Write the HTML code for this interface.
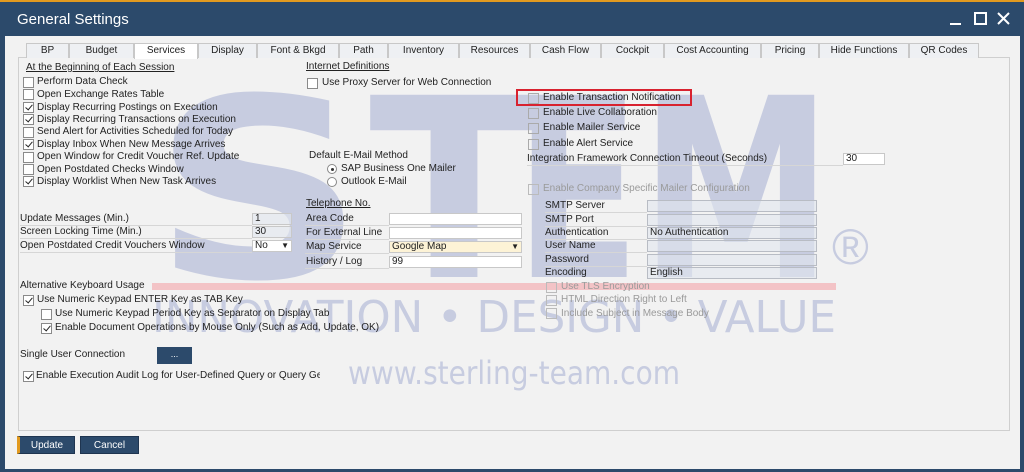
<!DOCTYPE html>
<html><head><meta charset="utf-8"><style>
*{margin:0;padding:0;box-sizing:border-box}
body{width:1024px;height:472px;overflow:hidden;background:#fff;font-family:"Liberation Sans",sans-serif;font-size:10px;color:#222;position:relative}
.a{position:absolute;white-space:nowrap;line-height:12px}
.cb{position:absolute;width:11px;height:11px;border:1px solid #8a8a8a;background:#fff}
.cb.k::after{content:"";position:absolute;left:3px;top:0px;width:3px;height:6px;border:solid #222;border-width:0 1.5px 1.5px 0;transform:rotate(40deg)}
.cb.g{border-color:#bbb;background:transparent}
.in{position:absolute;height:12px;background:#fff;border:1px solid #c8c8c8;font-size:10px;line-height:10px;padding-left:2px}
.gi{position:absolute;height:12px;background:rgba(225,230,238,0.6);border:1px solid #b8bcc4;font-size:10px;line-height:10px;padding-left:2px}
.tab{position:absolute;top:43px;height:15px;border:1px solid #c8c8c8;border-bottom:none;background:#eef0f3;text-align:center;line-height:13px;font-size:10px}
.u{text-decoration:underline}
.ln{position:absolute;height:1px;background:#d6d6d6}
.gr{color:#9a9a9a}
.btn{position:absolute;top:436px;height:18px;background:#2c4a6b;color:#fff;text-align:center;line-height:17px;font-size:10px;border:1px solid #1f3550}
</style></head><body>
<div style="position:absolute;left:0;top:0;width:1024px;height:472px;background:#2c4a6b"></div>
<div style="position:absolute;left:0;top:0;width:1024px;height:2px;background:#e29a1f"></div>
<div class="a" style="left:17px;top:11px;font-size:15px;line-height:18px;color:#fff">General Settings</div>
<div style="position:absolute;left:950px;top:23px;width:11px;height:2px;background:#fff"></div>
<div style="position:absolute;left:974px;top:12px;width:13px;height:13px;border:2px solid #fff"></div>
<svg style="position:absolute;left:997px;top:12px" width="13" height="13"><path d="M1 1L12 12M12 1L1 12" stroke="#fff" stroke-width="2"/></svg>
<div style="position:absolute;left:5px;top:36px;width:1015px;height:433px;background:#f2f2f2"></div>
<div style="position:absolute;left:18px;top:57px;width:992px;height:374px;border:1px solid #cfcfcf;background:#f2f2f2"></div>

<svg style="position:absolute;left:0;top:0" width="1024" height="472">
<g fill="#c7cce0" font-family="DejaVu Sans" font-weight="bold" font-size="250">
<text x="152" y="277" textLength="213" lengthAdjust="spacingAndGlyphs">S</text>
<text x="369" y="277" textLength="170" lengthAdjust="spacingAndGlyphs">T</text>
<text x="515" y="277" textLength="125" lengthAdjust="spacingAndGlyphs">E</text>
<text x="640" y="277" textLength="192" lengthAdjust="spacingAndGlyphs">M</text>
</g>
<text x="832" y="264" font-family="Liberation Sans" font-size="50" fill="#c7cce0">®</text>
<rect x="152" y="283" width="684" height="7" fill="#f3c3c6"/>
<text x="152" y="332" font-family="DejaVu Sans" font-size="44" fill="#c7cce0" textLength="684" lengthAdjust="spacingAndGlyphs">INNOVATION • DESIGN • VALUE</text>
<text x="348" y="384" font-family="DejaVu Sans" font-size="32" fill="#c7cce0" textLength="332" lengthAdjust="spacingAndGlyphs">www.sterling-team.com</text>
</svg>

<div class="tab" style="left:26px;width:43px">BP</div>
<div class="tab" style="left:69px;width:65px">Budget</div>
<div class="tab" style="left:134px;width:64px;background:#fff;height:16px">Services</div>
<div class="tab" style="left:198px;width:59px">Display</div>
<div class="tab" style="left:257px;width:82px">Font &amp; Bkgd</div>
<div class="tab" style="left:339px;width:49px">Path</div>
<div class="tab" style="left:388px;width:71px">Inventory</div>
<div class="tab" style="left:459px;width:71px">Resources</div>
<div class="tab" style="left:530px;width:71px">Cash Flow</div>
<div class="tab" style="left:601px;width:63px">Cockpit</div>
<div class="tab" style="left:664px;width:97px">Cost Accounting</div>
<div class="tab" style="left:761px;width:58px">Pricing</div>
<div class="tab" style="left:819px;width:90px">Hide Functions</div>
<div class="tab" style="left:909px;width:70px">QR Codes</div>

<div class="a u" style="left:26px;top:62px">At the Beginning of Each Session</div>
<div class="cb" style="left:23px;top:77px"></div><div class="a" style="left:37px;top:76px">Perform Data Check</div>
<div class="cb" style="left:23px;top:89px"></div><div class="a" style="left:37px;top:89px">Open Exchange Rates Table</div>
<div class="cb k" style="left:23px;top:102px"></div><div class="a" style="left:37px;top:102px">Display Recurring Postings on Execution</div>
<div class="cb k" style="left:23px;top:114px"></div><div class="a" style="left:37px;top:114px">Display Recurring Transactions on Execution</div>
<div class="cb" style="left:23px;top:127px"></div><div class="a" style="left:37px;top:126px">Send Alert for Activities Scheduled for Today</div>
<div class="cb k" style="left:23px;top:139px"></div><div class="a" style="left:37px;top:139px">Display Inbox When New Message Arrives</div>
<div class="cb" style="left:23px;top:152px"></div><div class="a" style="left:37px;top:151px">Open Window for Credit Voucher Ref. Update</div>
<div class="cb" style="left:23px;top:164px"></div><div class="a" style="left:37px;top:164px">Open Postdated Checks Window</div>
<div class="cb k" style="left:23px;top:176px"></div><div class="a" style="left:37px;top:176px">Display Worklist When New Task Arrives</div>

<div class="a u" style="left:306px;top:61px">Internet Definitions</div>
<div class="cb" style="left:307px;top:78px"></div><div class="a" style="left:322px;top:77px">Use Proxy Server for Web Connection</div>
<div class="a" style="left:309px;top:150px">Default E-Mail Method</div>
<div style="position:absolute;left:327px;top:164px;width:10px;height:10px;border-radius:50%;border:1px solid #888;background:#fff"><div style="position:absolute;left:3px;top:3px;width:3px;height:3px;border-radius:50%;background:#333"></div></div>
<div class="a" style="left:341px;top:163px">SAP Business One Mailer</div>
<div style="position:absolute;left:327px;top:177px;width:10px;height:10px;border-radius:50%;border:1px solid #888;background:#fff"></div>
<div class="a" style="left:341px;top:176px">Outlook E-Mail</div>

<div class="a u" style="left:306px;top:198px">Telephone No.</div>
<div class="a" style="left:306px;top:213px">Area Code</div><div class="in" style="left:389px;top:213px;width:133px"></div>
<div class="a" style="left:306px;top:227px">For External Line</div><div class="in" style="left:389px;top:227px;width:133px"></div>
<div class="a" style="left:306px;top:241px">Map Service</div><div class="in" style="left:389px;top:241px;width:133px;background:#fdf3d6">Google Map<span style="position:absolute;right:2px;top:0;font-size:8px">▼</span></div>
<div class="a" style="left:306px;top:256px">History / Log</div><div class="in" style="left:389px;top:256px;width:133px">99</div>
<div class="ln" style="left:305px;top:225px;width:84px"></div><div class="ln" style="left:305px;top:239px;width:84px"></div><div class="ln" style="left:305px;top:253px;width:84px"></div><div class="ln" style="left:305px;top:268px;width:84px"></div>

<div class="a" style="left:20px;top:213px">Update Messages (Min.)</div><div class="in" style="left:252px;top:213px;width:40px;background:rgba(225,230,238,0.6)">1</div>
<div class="a" style="left:20px;top:226px">Screen Locking Time (Min.)</div><div class="in" style="left:252px;top:226px;width:40px;background:rgba(225,230,238,0.6)">30</div>
<div class="a" style="left:20px;top:240px">Open Postdated Credit Vouchers Window</div><div class="in" style="left:252px;top:240px;width:40px">No<span style="position:absolute;right:2px;top:0;font-size:8px">▼</span></div>
<div class="ln" style="left:20px;top:225px;width:232px"></div><div class="ln" style="left:20px;top:238px;width:232px"></div><div class="ln" style="left:20px;top:252px;width:232px"></div>

<div class="a" style="left:20px;top:280px">Alternative Keyboard Usage</div>
<div class="cb k" style="left:23px;top:295px"></div><div class="a" style="left:37px;top:294px">Use Numeric Keypad ENTER Key as TAB Key</div>
<div class="cb" style="left:41px;top:309px"></div><div class="a" style="left:55px;top:308px">Use Numeric Keypad Period Key as Separator on Display Tab</div>
<div class="cb k" style="left:41px;top:323px"></div><div class="a" style="left:55px;top:322px">Enable Document Operations by Mouse Only (Such as Add, Update, OK)</div>
<div class="a" style="left:20px;top:349px">Single User Connection</div>
<div style="position:absolute;left:157px;top:347px;width:35px;height:17px;background:#2c4a6b;color:#fff;text-align:center;font-size:9px;line-height:14px">...</div>
<div class="cb k" style="left:23px;top:371px"></div><div class="a" style="left:36px;top:370px;width:284px;overflow:hidden">Enable Execution Audit Log for User-Defined Query or Query Generator</div>

<div class="cb" style="left:528px;top:93px;border-color:#aaa;background:transparent"></div><div class="a" style="left:543px;top:92px">Enable Transaction Notification</div>
<div style="position:absolute;left:516px;top:89px;width:176px;height:17px;border:2px solid #d8222f"></div>
<div class="cb" style="left:528px;top:108px;border-color:#aaa;background:transparent"></div><div class="a" style="left:543px;top:107px">Enable Live Collaboration</div>
<div class="cb" style="left:528px;top:123px;border-color:#aaa;background:transparent"></div><div class="a" style="left:543px;top:122px">Enable Mailer Service</div>
<div class="cb" style="left:528px;top:139px;border-color:#aaa;background:transparent"></div><div class="a" style="left:543px;top:138px">Enable Alert Service</div>
<div class="a" style="left:527px;top:153px">Integration Framework Connection Timeout (Seconds)</div>
<div class="ln" style="left:527px;top:165px;width:316px"></div>
<div class="in" style="left:843px;top:153px;width:42px">30</div>
<div class="cb g" style="left:528px;top:184px"></div><div class="a gr" style="left:543px;top:183px">Enable Company Specific Mailer Configuration</div>
<div class="a" style="left:545px;top:200px">SMTP Server</div><div class="gi" style="left:647px;top:200px;width:170px"></div>
<div class="a" style="left:545px;top:214px">SMTP Port</div><div class="gi" style="left:647px;top:214px;width:170px"></div>
<div class="a" style="left:545px;top:227px">Authentication</div><div class="gi" style="left:647px;top:227px;width:170px">No Authentication</div>
<div class="a" style="left:545px;top:240px">User Name</div><div class="gi" style="left:647px;top:240px;width:170px"></div>
<div class="a" style="left:545px;top:254px">Password</div><div class="gi" style="left:647px;top:254px;width:170px"></div>
<div class="a" style="left:545px;top:267px">Encoding</div><div class="gi" style="left:647px;top:267px;width:170px">English</div>
<div class="ln" style="left:545px;top:212px;width:102px"></div><div class="ln" style="left:545px;top:226px;width:102px"></div><div class="ln" style="left:545px;top:239px;width:102px"></div><div class="ln" style="left:545px;top:252px;width:102px"></div><div class="ln" style="left:545px;top:266px;width:102px"></div>
<div class="cb g" style="left:546px;top:282px"></div><div class="a gr" style="left:561px;top:281px">Use TLS Encryption</div>
<div class="cb g" style="left:546px;top:295px"></div><div class="a gr" style="left:561px;top:294px">HTML Direction Right to Left</div>
<div class="cb g" style="left:546px;top:308px"></div><div class="a gr" style="left:561px;top:308px">Include Subject in Message Body</div>

<div class="btn" style="left:17px;width:58px;border-left:3px solid #e29a1f">Update</div>
<div class="btn" style="left:80px;width:59px">Cancel</div>
</body></html>
